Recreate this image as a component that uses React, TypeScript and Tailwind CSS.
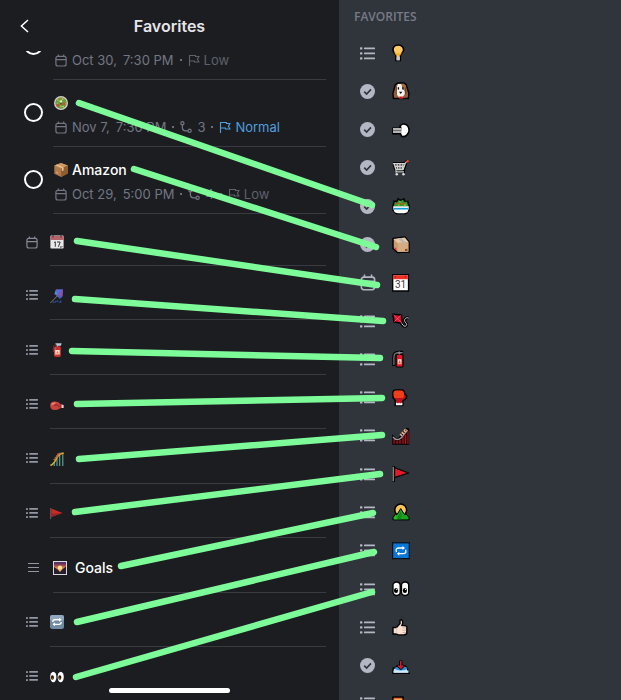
import type { ReactNode } from 'react';

const FONT = "font-['Inter','Liberation_Sans',sans-serif]";

/* ---------- line icons ---------- */

function ListIcon({ className }: { className: string }) {
  return (
    <svg viewBox="0 0 15 15" className={className} fill="currentColor" aria-hidden="true">
      {[1.2, 6.2, 11.2].map((y) => (
        <g key={y}>
          <rect x="0" y={y} width="2.4" height="2.4" rx="0.6" />
          <rect x="4" y={y + 0.2} width="11" height="1.9" rx="0.5" />
        </g>
      ))}
    </svg>
  );
}

function MenuIcon() {
  return (
    <svg viewBox="0 0 11 11" className="size-[11px]" stroke="currentColor" strokeWidth="1.2" aria-hidden="true">
      <path d="M0 1.5h11M0 5.500h11M0 9.500h11" />
    </svg>
  );
}

function CalendarIcon({ className }: { className: string }) {
  return (
    <svg viewBox="0 0 12 13" className={className} fill="none" stroke="currentColor" strokeWidth="1.2" aria-hidden="true">
      <rect x="0.9" y="2.4" width="10.2" height="9.6" rx="2" />
      <path d="M0.9 5.6h10.2M3.3 0.4v2M8.7 0.4v2" />
    </svg>
  );
}

function FlagIcon() {
  return (
    <svg viewBox="0 0 12 12" className="size-3" fill="none" stroke="currentColor" strokeWidth="1.1" aria-hidden="true">
      <path d="M1.500 12V1.500h6v1h3.400L9.400 5.200l1.500 2.800H6.500V7h-5" />
    </svg>
  );
}

function SubtaskIcon() {
  return (
    <svg viewBox="0 0 12 12" className="size-3" fill="none" stroke="currentColor" strokeWidth="1.2" aria-hidden="true">
      <circle cx="2.4" cy="2.2" r="1.6" />
      <circle cx="9.6" cy="9.8" r="1.6" />
      <path d="M2.4 3.8v3q0 3 3 3h2.600" />
    </svg>
  );
}

function CheckIcon() {
  return (
    <svg viewBox="0 0 15 15" className="size-[15px]" aria-hidden="true">
      <circle cx="7.5" cy="7.5" r="7.5" fill="#b3b7c3" />
      <path d="M4.2 7.7 6.6 10l4.4-4.6" fill="none" stroke="#30343b" strokeWidth="1.6" />
    </svg>
  );
}

/* ---------- small 14px pictures of the phone list ---------- */

const phoneArt: Record<string, ReactNode> = {
  salad: (
    <>
      <circle cx="7" cy="7" r="7" fill="#d3cfc8" />
      <circle cx="7" cy="7" r="5.7" fill="#6a9a3c" />
      <path d="M3 3.2l2 .6-1 1.6zM8 2l2 1-2 1.2zM10 7l2 .5-1.6 1.8zM2 7l2-.6.4 1.6zM6 9.5l2 .6-1.4 1.6z" fill="#a9d45a" />
      <path d="M5.2 5l2.4-1 .8 1.8-2 1zM8 10l2 .2-.6 1.4z" fill="#e6eec6" />
      <circle cx="3.9" cy="9.2" r="1.5" fill="#d24a37" />
      <circle cx="9.9" cy="7.9" r="1.4" fill="#cf4b36" />
      <circle cx="7" cy="2.6" r="0.9" fill="#d98144" />
      <circle cx="6.9" cy="7.7" r="0.9" fill="#2f5e20" />
    </>
  ),
  box: (
    <>
      <path d="M7 0l6.8 2.6v8L7.2 14 .3 10.7V2.6z" fill="#b07a48" />
      <path d="M7 0l6.8 2.6L7.2 5.4.3 2.6z" fill="#cf9a64" />
      <path d="M7.2 5.4l6.6-2.8v8L7.2 14z" fill="#8f5c30" />
      <path d="M3 1.6l6.6 2.8v3l-1.7.6V5L2 2.2z" fill="#e3c39a" />
      <path d="M2 8.6l2.2 1v1.2l-2.2-1z" fill="#d5a97a" />
    </>
  ),
  calendar: (
    <>
      <rect x="0.4" y="0.6" width="13.2" height="13" rx="0.8" fill="#e9e8e8" />
      <path d="M.4 1h13.2v4H.4z" fill="#b5656a" />
      <path d="M3 0v2.4M11 0v2.4" stroke="#5a3437" strokeWidth="1.1" />
      <path d="M4 7.6l1.3-.8v5M7 7h3.2L8.4 11.8" fill="none" stroke="#37383c" strokeWidth="1" />
      <path d="M10 11.2h3.6l-3.6 2.4z" fill="#77797d" />
    </>
  ),
  kite: (
    <>
      <path d="M6 .6L12.900.6 12.400 7.500 9.800 9.800 4.500 5z" fill="#6b56b3" />
      <path d="M6 .6l1.800 5.400L4.500 5z" fill="#4b8fdc" />
      <path d="M7.8 6l4.600 1.500L9.800 9.800z" fill="#3d65c4" />
      <path d="M6 .6h6.900L7.800 6z" fill="#5b6ad0" />
      <path d="M12.900.6l-.5 6.900L7.8 6z" fill="#8655a6" />
      <path d="M7.6 6.6L.4 14" stroke="#85878d" strokeWidth=".9" />
      <path d="M3 12.7q2 1.5 3-.2t3 .6 1.7-1.6" fill="none" stroke="#2a5bb5" strokeWidth="1.2" strokeDasharray="1.6 .8" />
    </>
  ),
  extinguisher: (
    <>
      <path d="M5.500.8h6M6.500 2.200h4.500M7.500 1v3" stroke="#b9c8d2" strokeWidth="1.2" />
      <path d="M6 1.8Q3 1.6 3.4 6v3" fill="none" stroke="#6b3238" strokeWidth="1" />
      <rect x="4" y="3.2" width="7" height="10.8" rx="2" fill="#c5302d" />
      <path d="M5.200 4.5v8" stroke="#e25b50" strokeWidth="1" />
      <rect x="5.3" y="7" width="4.400" height="4.500" fill="#f0e5d4" />
      <path d="M7.5 7.7l1.4 2.8H6.1z" fill="#e07a4a" />
    </>
  ),
  glove: (
    <>
      <path d="M.2 7.4Q.2 3.8 4.2 3.5q4.3-.3 5.6 2.1l2.2 1v3.2l-2.4.7q-1.8 1.8-5.2 1.6Q.2 11.8.2 7.4z" fill="#c8433c" />
      <path d="M1.4 6Q3 3.8 6 4.7L4 6.2q-1.7 0-2.6 1.6z" fill="#ef8d82" />
      <path d="M4.2 7.3q3.8-1.5 5 1.7" fill="none" stroke="#842424" strokeWidth="1" />
      <path d="M11.7 6.6l1.9.3v3l-2 .2z" fill="#e6d9d4" />
      <path d="M10.4 6v4.3" stroke="#8e2a2a" strokeWidth=".8" />
    </>
  ),
  coaster: (
    <>
      <path d="M4.2 10.5V14M7 6.5V14M9.7 3V14M12.8 2.5V14" stroke="#5aab9c" strokeWidth="1.1" />
      <path d="M.4 13.6Q4 12 6.5 6.5T13.8 1.4" fill="none" stroke="#d4b23a" strokeWidth="1.6" />
      <path d="M4 8.2L8.8 1.5" stroke="#c76639" strokeWidth="2" strokeDasharray="1.5 .6" />
      <path d="M8.3 1.6h2.5" stroke="#c35d47" strokeWidth="1.5" />
    </>
  ),
  flag: (
    <>
      <path d="M.7 2v11" stroke="#775c5d" strokeWidth="1" />
      <path d="M1.3 2.6L12.4 7 1.3 11z" fill="#c92c28" />
      <path d="M1.3 7.7L12.4 7 1.3 11z" fill="#9c2322" />
    </>
  ),
  sunrise: (
    <>
      <rect width="14" height="14" fill="#d8d9de" />
      <rect x="1" y="1" width="12" height="12" fill="#5a3362" />
      <path d="M1 3.500h12v4H1z" fill="#a54948" />
      <path d="M1 5.500h12v4H1z" fill="#d9804d" />
      <circle cx="7" cy="6.800" r="2.2" fill="#ffe7a0" />
      <path d="M1 6l3.8 2.7L7 11l2.5-2.8L13 5.4V13H1z" fill="#271e2c" />
      <path d="M5 8.2h4L7 11z" fill="#eeb967" />
    </>
  ),
  repeat: (
    <>
      <rect width="14" height="14" rx="2.3" fill="#718ba5" />
      <rect width="14" height="6" rx="2.3" fill="#8fa8c0" />
      <path d="M2.8 7.1q0-2.4 2.2-2.4h5.4M11.2 6.9q0 2.4-2.2 2.4H3.6" fill="none" stroke="#fff" strokeWidth="1.3" />
      <path d="M9 2.7l2.5 2L9 6.7zM5 7.3L2.5 9.3 5 11.3z" fill="#fff" />
    </>
  ),
  eyes: (
    <>
      <ellipse cx="3.3" cy="7" rx="3.1" ry="5.200" fill="#fff" />
      <ellipse cx="10.7" cy="7" rx="3.1" ry="5.200" fill="#fff" />
      <ellipse cx="2.4" cy="7.5" rx="1.5" ry="2.2" fill="#241505" />
      <ellipse cx="9.8" cy="7.5" rx="1.5" ry="2.2" fill="#241505" />
      <path d="M1.6 8.2H3M9 8.2h1.4" stroke="#c88322" strokeWidth=".9" />
    </>
  ),
};

function PhoneArt({ name }: { name: string }) {
  return (
    <svg viewBox="0 0 14 14" className="size-[14px] shrink-0" aria-hidden="true">
      {phoneArt[name]}
    </svg>
  );
}

/* ---------- outlined 18px pictures of the sidebar ---------- */

const sideArt: Record<string, ReactNode> = {
  bulb: (
    <>
      <path d="M6.3 1C3 1 1 3.2 1 5.9c0 2.4 2.5 3.6 2.9 5.6v5h4.4v-5c.4-2 3.3-3.2 3.3-5.600C11.600 3.200 9.500 1 6.300 1z" fill="#fdca65" stroke="#000" strokeWidth="1.6" />
      <path d="M4 11.400q-.4-1.500-2-3.200 4 2.200 8.600 0-2 1.700-2.400 3.200z" fill="#fbb324" />
      <path d="M4.500 12.400h3.400v4H4.500z" fill="#c9c9cc" />
    </>
  ),
  dog: (
    <>
      <path d="M5.500 1h6.500l2.300 2 2.600 8.500-.6 5H1.500L.9 11.500 3.200 3z" fill="#96603a" stroke="#000" strokeWidth="1.400" />
      <path d="M6 2h3.200l3.200 4 .4 6-3 4H7.500l-3-4L4.700 5z" fill="#f5f3ee" />
      <path d="M9.500 1.700h2.300l2 2 .3 6.500L11.500 8Q9.400 5 9.500 1.700z" fill="#a56a3e" />
      <path d="M4.300 4.500v8M13.700 5.500v7" stroke="#4f2e18" strokeWidth=".8" />
      <path d="M6.400 5.300v2.300M10.900 5.300v2.300" stroke="#000" strokeWidth="1.300" />
      <path d="M7 9.800h3.400l-1.700 2.200z" fill="#111" />
      <path d="M7.300 14.500h3.400v2.300H7.300z" fill="#e81224" />
    </>
  ),
  hand: (
    <>
      <path d="M1 7.200h7.500L8 5 10.500 3.200q3.500-.6 5 1.500T17 9t-2 4.800-5 1.700L8 12.700H1z" fill="#000" stroke="#000" strokeWidth="1.600" />
      <path d="M9.500 6.500L9 5l1.800-1.200q3-.2 4.200 1.500T16.300 9.200t-1.800 4-4.200 1.500L9 12z" fill="#fff" />
      <path d="M1 7h8.500v5H1z" fill="#b4b4b4" />
      <path d="M1 9.500h8" stroke="#666" strokeWidth=".9" />
    </>
  ),
  cart: (
    <>
      <path d="M1 4.500h12L15.700 1.700M2 5l2 6h7.200l3-8M5 12.300h8M5 15h.5M12 15h.5" fill="none" stroke="#000" strokeWidth="3.200" strokeLinejoin="round" />
      <path d="M1.200 4.500h12l-2 6.800H3.300z" fill="#555" />
      <path d="M1 4.500h12L14.500 3M2 4.500l2 6h7.200l2-6M2.500 7.300h9M5 4.500l1 7M8 4.500v7M11 4.500l-1 7M4 11v1.800h8" fill="none" stroke="#d1d1d1" strokeWidth="1.200" />
      <path d="M14 3.300l2.500-1.700" stroke="#e65238" strokeWidth="2" />
      <circle cx="4.800" cy="15.300" r="1.300" fill="#ddd" /><circle cx="11.500" cy="15.300" r="1.300" fill="#ddd" />
    </>
  ),
  salad: (
    <>
      <path d="M1 9l1-5 3 .5L6 1.800l3 1.500 2.800-1.600 1.500 3 2.600-.5L17 9v4l-3 3.500H4L1 13z" fill="#2a3b20" stroke="#000" strokeWidth="1.400" />
      <path d="M2 9l1-4 2 1 1.500-3 2 2 2-2.500 1.500 3 2.800-1L16 9z" fill="#20a62b" />
      <path d="M4 7l2-1M11 7l2-1M8 8l1-2" stroke="#f03a30" strokeWidth="1.500" />
      <path d="M8 4v1.500M6 8h1.500M12 8h2" stroke="#f1b62f" strokeWidth="1.100" />
      <path d="M1.200 9.300h15.600Q17 16.300 12 16.300H6Q1 16.300 1.200 9.300z" fill="#fff" />
      <path d="M1.600 11.700h14.800" stroke="#159cd8" strokeWidth="1.700" />
    </>
  ),
  box: (
    <>
      <path d="M1 2.600L13 1l4 5v10L5.500 16.500 1 12.500z" fill="#c99b70" stroke="#000" strokeWidth="1.500" />
      <path d="M1.500 2.900L12.800 1.600l3.900 4.600-11 .7z" fill="#e3c9a8" />
      <path d="M5.700 7l10.800-.7v9.500L5.700 16z" fill="#d7aa7f" />
      <path d="M6 2.400l3.200-.4 3.800 4.300v2.200l-2.500-.5V6.500z" fill="#b6b4b0" />
      <path d="M2.700 11l1.700 1.800v2L2.700 13.200z" fill="#e52a36" />
      <path d="M13 13l2.500-.2v2L13 15z" fill="#755238" />
    </>
  ),
  calendar: (
    <>
      <path d="M.7.700h15.800v16.300H.7z" fill="#fff" stroke="#000" strokeWidth="1.300" />
      <path d="M1.100 1.200h14.800v4H1.100z" fill="#ee3124" />
      <path d="M3 2.600h1M13 2.600h1" stroke="#8e1a13" strokeWidth="1.200" />
      <text x="8.500" y="14.300" textAnchor="middle" fontSize="10" fontFamily="Roboto, sans-serif" fill="#3b3b3b">31</text>
    </>
  ),
  kite: (
    <>
      <path d="M1 2.300L9.300 3 10.300 11.500 2 9.900z" fill="#d70f2b" stroke="#000" strokeWidth="1.500" />
      <path d="M1.300 2.500l9 9M9.200 3.200L2.300 9.700" stroke="#f36579" strokeWidth=".8" />
      <path d="M9.500 11.300q2.400 4.500 4.700 2.300c2-2-2.600-3.300-1.500-6.100 1-2.300 3-1.800 4-1.500" fill="none" stroke="#000" strokeWidth="3" />
      <path d="M9.700 11.300q2.400 4.500 4.500 2.300c2-2-2.600-3.300-1.500-6.100 1-2.300 3-1.800 4-1.500" fill="none" stroke="#ccc" strokeWidth="1" />
    </>
  ),
  extinguisher: (
    <>
      <path d="M1.700 16V7Q2 2.200 6.500 2.300h4.700" fill="none" stroke="#000" strokeWidth="3" />
      <rect x="4.200" y="4.500" width="6.800" height="12.500" rx="1" fill="#e5162b" stroke="#000" strokeWidth="1.200" />
      <path d="M1.900 15V7Q2 2.700 6.500 2.600h4.200" fill="none" stroke="#777" strokeWidth="1.200" />
      <path d="M5.300 3h4M7.300 1.600v3" stroke="#8d8d8d" strokeWidth="1.200" />
      <path d="M5.700 9.200h3.800v5H5.700z" fill="#f3ded5" /><path d="M7.600 10l1.400 3.500H6.200z" fill="#eb5a31" />
    </>
  ),
  glove: (
    <>
      <path d="M1 3.500Q1 1 4 1h6q2 0 2.300 3.300L14.500 6.500V9L10.800 12v4.500H3.300v-5L1 8.500z" fill="#b91320" stroke="#000" strokeWidth="1.500" />
      <path d="M1.500 4Q1.500 1.500 4 1.500h5.500q2.300 0 2.500 3V8l-1.200 1H3Q1.400 8.200 1.500 4z" fill="#ef3f18" />
      <path d="M4 16.200v-2.700l2 .9 1-1 1 1 2.400-.9v2.700z" fill="#fff" />
    </>
  ),
  coaster: (
    <>
      <path d="M1 9l4 4L10 8 14.500 1.500l2 .5V17H1z" fill="#230608" stroke="#000" strokeWidth="1.400" />
      <path d="M2 12v5M5 14v3M8 13v4M11 10v7M13.500 8v9M16 4v13" stroke="#b4111e" strokeWidth="1.200" />
      <path d="M1 10q4 5 8.300.800L15.500 3" fill="none" stroke="#999" strokeWidth="1.300" />
      <path d="M8.500 8.500L14.500 2.600" stroke="#e3a7a2" strokeWidth="2.800" strokeDasharray="1.600 1" />
      <path d="M12.800 2v3M10.500 5v2" stroke="#f1b549" strokeWidth="1.200" />
    </>
  ),
  flag: (
    <>
      <path d="M1.700 1v16" stroke="#000" strokeWidth="2.600" />
      <path d="M2.500 2.600L16.300 8 2.500 12.600z" fill="#e71829" stroke="#000" strokeWidth="1.300" />
      <path d="M1.200 1.800v14.500" stroke="#b9b9b9" strokeWidth="1" />
    </>
  ),
  sunrise: (
    <>
      <circle cx="8.700" cy="7" r="5.900" fill="#fbc45f" stroke="#000" strokeWidth="1.500" />
      <path d="M1 16.900v-2.500L3.500 11l1.500.6L8.700 5.600l3.800 6 1.500-.6 3 3.400v2.500z" fill="#14a821" stroke="#000" strokeWidth="1" />
      <path d="M5 16.300l3.600-7.800L9.800 12l-1 4.300z" fill="#20801e" />
      <path d="M2 14.500l1.700-2 1.500 3.800H2z" fill="#2dbd31" />
    </>
  ),
  repeat: (
    <>
      <rect x=".6" y=".8" width="16.700" height="15.800" fill="#0877d4" stroke="#050f19" strokeWidth="1.200" />
      <path d="M4.500 10Q3 6 7 6h4.500M13.500 7.700q1.500 4-2.500 4H6.500" fill="none" stroke="#fff" strokeWidth="1.300" />
      <path d="M10.500 4L13 6l-2.500 2zM7.300 9.700L4.800 11.700l2.500 2z" fill="#fff" />
    </>
  ),
  eyes: (
    <>
      <rect x="1" y="2" width="7.200" height="13.500" rx="3.400" fill="#fff" stroke="#000" strokeWidth="1.300" />
      <rect x="9.500" y="2" width="7.200" height="13.500" rx="3.400" fill="#fff" stroke="#000" strokeWidth="1.300" />
      <ellipse cx="4" cy="10.500" rx="2.100" ry="2.600" fill="#000" />
      <ellipse cx="12.900" cy="10.500" rx="2.100" ry="2.600" fill="#000" />
      <path d="M4.200 9.500h1M13 9.500h1" stroke="#fff" strokeWidth="1" />
    </>
  ),
  thumb: (
    <>
      <path d="M1 9.500h3.500L8 5.500V2.300Q9 1 10.400 2.600q.9 2-.5 4.900l4 .3q1.500.7.900 2.200v5.500q-1 1.400-3 1.400H6L4.500 16H1z" fill="#f8dfd2" stroke="#000" strokeWidth="1.400" />
      <path d="M10.500 9.800h3.700M10.500 12.200h3.700M10.500 14.500h3.300" stroke="#caa797" strokeWidth=".8" />
      <path d="M4.600 9.600v6" stroke="#e6c2b1" strokeWidth=".8" />
    </>
  ),
  fountain: (
    <>
      <path d="M1.200 11h2L5 9h8.500l1.500 2 2 5.300H1z" fill="#b4e0f6" stroke="#000" strokeWidth="1.400" />
      <path d="M3 10.500q5-2 12 0v1.500q-5 3.500-12 0z" fill="#2d8ed6" />
      <path d="M1.500 13.500h15v2.300h-15z" fill="#c8eafb" />
      <path d="M8.800 3.500v7M6 8.300l2.800 2.700 2.800-2.700" fill="none" stroke="#000" strokeWidth="3.200" />
      <path d="M8.800 4v7M6.400 8.600l2.400 2.400 2.400-2.400" fill="none" stroke="#d0182f" strokeWidth="1.600" />
    </>
  ),
  book: (
    <>
      <rect x="1" y="2" width="10" height="14" fill="#df3b24" stroke="#000" strokeWidth="1.400" />
      <path d="M1.700 4.400h8.600" stroke="#f8b446" strokeWidth="1.600" />
    </>
  ),
};

/* ---------- data ---------- */

type Task = { art?: string; title: string; label: string; date: string; time: string; subtasks?: number; priority: 'Low' | 'Normal' };

const tasks: Task[] = [
  { title: '', label: 'Task', date: 'Oct 30,', time: '7:30 PM', priority: 'Low' },
  { art: 'salad', title: '', label: 'Salad', date: 'Nov 7,', time: '7:30 PM', subtasks: 3, priority: 'Normal' },
  { art: 'box', title: 'Amazon', label: 'Amazon', date: 'Oct 29,', time: '5:00 PM', subtasks: 4, priority: 'Low' },
];

const lists = ['kite', 'extinguisher', 'glove', 'coaster', 'flag', 'sunrise', 'repeat'];

const sidebar: [string, string][] = [
  ['list', 'bulb'], ['check', 'dog'], ['check', 'hand'], ['check', 'cart'], ['check', 'salad'], ['check', 'box'],
  ['calendar', 'calendar'], ['list', 'kite'], ['list', 'extinguisher'], ['list', 'glove'], ['list', 'coaster'],
  ['list', 'flag'], ['list', 'sunrise'], ['list', 'repeat'], ['list', 'eyes'], ['list', 'thumb'],
  ['check', 'fountain'], ['list', 'book'],
];

const links = [
  [79, 103, 372, 205], [134, 169, 376, 247], [77, 241, 377, 285], [75, 299, 383, 321],
  [72, 351, 380, 358], [77, 404, 382, 398], [79, 459, 382, 435], [75, 512, 380, 474],
  [121, 566, 373, 513], [77, 622, 374, 552], [76, 677, 372, 592],
];

/* ---------- rows ---------- */

function Dot() {
  return <span className="mx-px size-[2px] rounded-full bg-[#858a96]" />;
}

function TaskRow({ task }: { task: Task }) {
  return (
    <li className="flex h-[67px] pl-6">
      <input
        type="checkbox"
        aria-label={task.label}
        className="mt-[23px] size-[19px] shrink-0 appearance-none rounded-full border-2 border-white"
      />
      <div className="ml-[10px] flex-1 border-b border-[#393b41] pt-[13px]">
        <div className="ml-px flex h-5 items-center gap-1 text-[14px] leading-5 font-medium text-white">
          {task.art && <PhoneArt name={task.art} />}
          <span>{task.title}</span>
        </div>
        <div className="mt-1 ml-[2px] flex h-5 items-center gap-[5px] text-[13px] leading-5 whitespace-nowrap text-[#727783]">
          <CalendarIcon className="h-[13px] w-3" />
          <span>{task.date}</span>
          <span className="ml-px">{task.time}</span>
          <Dot />
          {task.subtasks && (
            <>
              <SubtaskIcon />
              <span>{task.subtasks}</span>
              <Dot />
            </>
          )}
          <span className={task.priority === 'Normal' ? 'flex items-center gap-1 text-[#4f9fdf]' : 'flex items-center gap-1 text-[#5c616c]'}>
            <FlagIcon />
            {task.priority}
          </span>
        </div>
      </div>
    </li>
  );
}

function ListRow({ name }: { name: string }) {
  const goal = name === 'sunrise';
  return (
    <li className="flex">
      <span className={goal ? 'flex w-[53px] items-center pt-1 pl-7 text-[#9297a3]' : 'flex w-[50px] items-center pt-1 pl-[26px] text-[#9297a3]'}>
        {goal ? <MenuIcon /> : <ListIcon className="size-3" />}
      </span>
      <a href="#" aria-label={goal ? 'Goals' : name} className="flex flex-1 items-center gap-2 border-b border-[#393b41] pt-[6px] text-[14px] leading-5 font-medium text-white">
        <PhoneArt name={name} />
        {goal && 'Goals'}
      </a>
    </li>
  );
}

export default function App() {
  return (
    <div className={`relative grid h-screen grid-cols-[339fr_282fr] overflow-hidden bg-[#1c1d21] ${FONT}`}>
      <main className="relative flex min-h-0 flex-col overflow-hidden">
        <header className="grid h-[51px] shrink-0 grid-cols-[48px_1fr_48px] items-center">
          <button type="button" aria-label="Back" className="flex h-8 items-center pl-5 text-white">
            <svg viewBox="0 0 9 14" className="h-[14px] w-[9px]" fill="none" stroke="currentColor" strokeWidth="1.500" aria-hidden="true">
              <path d="M8 1 1.400 7 8 13" />
            </svg>
          </button>
          <h1 className="text-center text-base leading-5 font-semibold text-[#e6e6e9]">Favorites</h1>
        </header>
        <div className="min-h-0 flex-1 overflow-hidden pr-[13px]">
          <ul className="-mt-[38px]">
            {tasks.map((task) => (
              <TaskRow key={task.date} task={task} />
            ))}
          </ul>
          <div className="flex h-[52px]">
            <span className="flex w-[50px] items-center pt-1 pl-[26px] text-[#858a96]">
              <CalendarIcon className="h-[13px] w-3" />
            </span>
            <a href="#" aria-label="Calendar" className="flex flex-1 items-center border-b border-[#393b41] pt-1">
              <PhoneArt name="calendar" />
            </a>
          </div>
          <ul className="grid h-[381px] auto-rows-fr">
            {lists.map((name) => (
              <ListRow key={name} name={name} />
            ))}
          </ul>
          <ul className="grid h-[54px]">
            <ListRow name="eyes" />
          </ul>
        </div>
        <div className="absolute inset-x-0 bottom-[7px] mx-auto h-[5px] w-[121px] rounded-full bg-white" />
      </main>

      <aside className="overflow-hidden bg-[#30343b]">
        <h2 className="h-[34px] pl-[15px] font-['Open_Sans','Noto_Sans',sans-serif] text-[12px] leading-[34px] font-semibold text-[#767b87]">
          FAVORITES
        </h2>
        <ul className="grid h-[689px] auto-rows-fr">
          {sidebar.map(([kind, art]) => (
            <li key={art} className="flex">
              <a href="#" aria-label={art} className="flex flex-1 items-center gap-4 pl-[21px] text-[#b3b7c3]">
                <span className="w-4">
                  {kind === 'check' && <CheckIcon />}
                  {kind === 'list' && <ListIcon className="size-[15px]" />}
                  {kind === 'calendar' && <CalendarIcon className="h-[17px] w-4" />}
                </span>
                <svg viewBox="0 0 18 18" className="size-[18px]" aria-hidden="true">
                  {sideArt[art]}
                </svg>
              </a>
            </li>
          ))}
        </ul>
      </aside>

      <svg className="pointer-events-none absolute inset-0 size-full" stroke="#7efb99" strokeWidth="6.500" strokeLinecap="round" aria-hidden="true">
        {links.map(([x1, y1, x2, y2]) => (
          <line key={y1} x1={x1} y1={y1} x2={x2} y2={y2} />
        ))}
      </svg>
    </div>
  );
}
